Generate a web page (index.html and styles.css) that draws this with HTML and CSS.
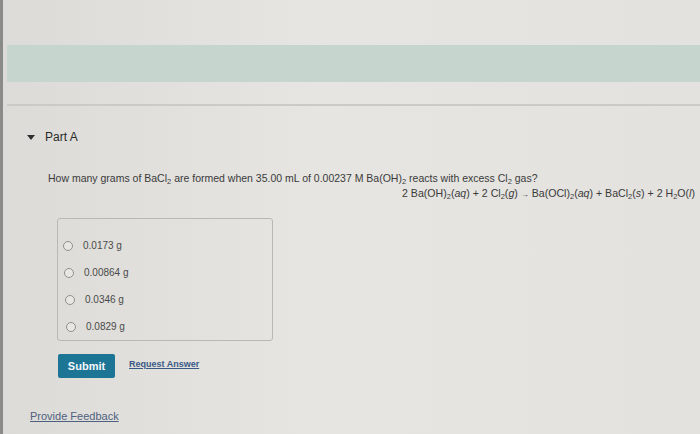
FILE: index.html
```html
<!DOCTYPE html>
<html>
<head>
<meta charset="utf-8">
<link rel="stylesheet" href="styles.css">
</head>
<body>
<div class="screen">
  <div class="top-space"></div>
  <div class="band"></div>
  <div class="gap"></div>
  <div class="rule"></div>
  <div class="part">
    <div class="part-head">
      <span class="caret"></span>
      <span class="part-title">Part A</span>
    </div>
    <p class="question">How many grams of BaCl<sub>2</sub> are formed when 35.00 mL of 0.00237 M Ba(OH)<sub>2</sub> reacts with excess Cl<sub>2</sub> gas?</p>
    <p class="equation">2 Ba(OH)<sub>2</sub>(<i>aq</i>) + 2 Cl<sub>2</sub>(<i>g</i>) <span class="arrow">→</span> Ba(OCl)<sub>2</sub>(<i>aq</i>) + BaCl<sub>2</sub>(<i>s</i>) + 2 H<sub>2</sub>O(<i>l</i>)</p>
    <div class="choices">
      <label class="choice"><span class="radio"></span>0.0173 g</label>
      <label class="choice"><span class="radio"></span>0.00864 g</label>
      <label class="choice"><span class="radio"></span>0.0346 g</label>
      <label class="choice"><span class="radio"></span>0.0829 g</label>
    </div>
    <div class="actions">
      <button class="submit">Submit</button>
      <a class="request">Request Answer</a>
    </div>
    <a class="feedback">Provide Feedback</a>
  </div>
</div>
</body>
</html>
```
FILE: styles.css
```css
html, body {
  margin: 0;
  padding: 0;
}
body {
  width: 700px;
  height: 434px;
  overflow: hidden;
  background: #e3e2de;
  font-family: "Liberation Sans", Arial, sans-serif;
  color: #3a3a3a;
}
.screen {
  height: 434px;
  border-left: 3px solid #8a8a88;
  background: linear-gradient(90deg, #dcdbd7 0%, #e6e5e1 45%, #e3e2de 100%);
  box-sizing: border-box;
}
.top-space {
  height: 45px;
}
.band {
  height: 37px;
  margin-left: 4px;
  background: #c7d5cf;
}
.gap {
  height: 22px;
}
.rule {
  height: 2px;
  margin-left: 4px;
  background: #cbcac6;
}
.part {
  padding-left: 24px;
}
.part-head {
  display: flex;
  align-items: center;
  margin-top: 24px;
  height: 14px;
}
.caret {
  width: 0;
  height: 0;
  border-left: 4px solid transparent;
  border-right: 4px solid transparent;
  border-top: 5px solid #2f2f2f;
  margin-right: 10px;
}
.part-title {
  font-size: 12px;
  color: #2a2a2a;
}
.question {
  margin: 27px 0 0 21px;
  font-size: 10.5px;
  color: #3a3a3a;
  line-height: 14px;
}
sub {
  font-size: 7.5px;
  vertical-align: -2px;
  line-height: 0;
}
.equation {
  margin: 1px 0 0 0;
  padding-right: 5px;
  text-align: right;
  font-size: 10.6px;
  line-height: 14px;
  color: #3a3a3a;
}
.arrow {
  font-size: 8px;
}
.choices {
  margin: 16px 0 0 30px;
  width: 216px;
  height: 123px;
  box-sizing: border-box;
  border: 1px solid #b9b8b4;
  border-radius: 3px;
  padding: 20px 0 0 5px;
  display: flex;
  flex-direction: column;
  gap: 14px;
}
.choice {
  display: flex;
  align-items: center;
  font-size: 10px;
  color: #4a4a4a;
  height: 13px;
}
.choice:nth-child(2) { padding-left: 1px; }
.choice:nth-child(3) { padding-left: 2px; }
.choice:nth-child(4) { padding-left: 3px; }
.radio {
  width: 8px;
  height: 8px;
  border: 1.3px solid #8f8f8d;
  border-radius: 50%;
  margin-right: 10px;
  background: #e8e7e3;
}
.actions {
  display: flex;
  align-items: center;
  margin: 13px 0 0 31px;
}
.submit {
  width: 57px;
  height: 24px;
  border: none;
  border-radius: 2px;
  background: #1d7596;
  color: #f4f8fa;
  font-family: "Liberation Sans", Arial, sans-serif;
  font-weight: bold;
  font-size: 11px;
  padding: 0;
}
.request {
  margin-left: 14px;
  margin-top: -5px;
  font-size: 9px;
  font-weight: bold;
  color: #3a5a86;
  text-decoration: underline;
}
.feedback {
  display: block;
  margin: 32px 0 0 3px;
  font-size: 11px;
  color: #4f5f80;
  text-decoration: underline;
}
```
